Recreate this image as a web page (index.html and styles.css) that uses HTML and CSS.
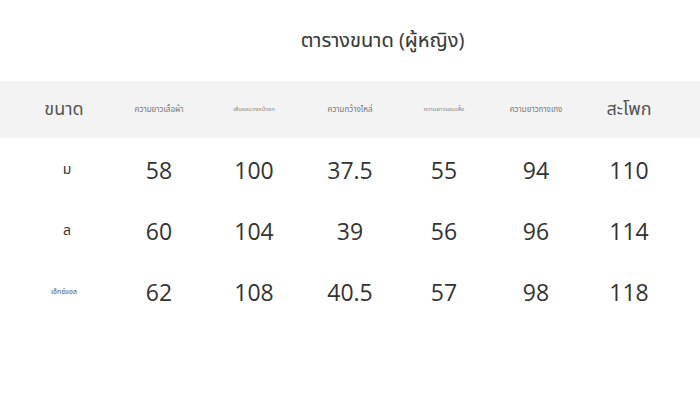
FILE: index.html
```html
<!DOCTYPE html>
<html lang="th">
<head>
<meta charset="utf-8">
<link rel="stylesheet" href="styles.css">
</head>
<body>
<div class="page">
  <h1 class="title">ตารางขนาด (ผู้หญิง)</h1>
  <div class="band">
    <div class="grid head">
      <div class="cell big">ขนาด</div>
      <div class="cell tiny">ความยาวเสื้อผ้า</div>
      <div class="cell tinier">เส้นรอบวงหน้าอก</div>
      <div class="cell tiny">ความกว้างไหล่</div>
      <div class="cell tinier">ความยาวแขนเสื้อ</div>
      <div class="cell tiny">ความยาวกางเกง</div>
      <div class="cell big">สะโพก</div>
    </div>
  </div>
  <div class="grid row first">
    <div class="cell label">ม</div>
    <div class="cell num">58</div>
    <div class="cell num">100</div>
    <div class="cell num">37.5</div>
    <div class="cell num">55</div>
    <div class="cell num">94</div>
    <div class="cell num">110</div>
  </div>
  <div class="grid row">
    <div class="cell label">ล</div>
    <div class="cell num">60</div>
    <div class="cell num">104</div>
    <div class="cell num">39</div>
    <div class="cell num">56</div>
    <div class="cell num">96</div>
    <div class="cell num">114</div>
  </div>
  <div class="grid row">
    <div class="cell label small">เอ็กซ์แอล</div>
    <div class="cell num">62</div>
    <div class="cell num">108</div>
    <div class="cell num">40.5</div>
    <div class="cell num">57</div>
    <div class="cell num">98</div>
    <div class="cell num">118</div>
  </div>
</div>
</body>
</html>
```
FILE: styles.css
```css
* { box-sizing: border-box; }
html, body { margin: 0; padding: 0; background: #ffffff; }
body {
  width: 700px;
  height: 418px;
  overflow: hidden;
  font-family: "Open Sans", "Noto Sans Thai", "Noto Sans", "DejaVu Sans", sans-serif;
  color: #333;
}
.page { padding-top: 25px; }
.title {
  margin: 0;
  height: 56px;
  text-align: center;
  font-size: 20px;
  font-weight: normal;
  color: #3a3a3a;
  line-height: 30px;
  padding-left: 65px;
  -webkit-text-stroke: 0.12px #3a3a3a;
}
.band {
  background: #f3f3f3;
  height: 57px;
  display: flex;
  align-items: center;
}
.grid {
  display: grid;
  grid-template-columns: 96px 94px 96px 96px 92px 92px 94px;
  padding-left: 16px;
  align-items: center;
}
.cell { text-align: center; white-space: nowrap; }
.head .big { font-size: 18px; color: #555; }
.head .tiny { font-size: 8px; color: #777; }
.head .tinier { font-size: 6px; color: #888; }
.row { height: 61px; }
.row.first { margin-top: 1px; }
.num { font-size: 23px; color: #333; }
.label { font-size: 14px; color: #333; padding-left: 6px; }
.label.small { font-size: 7px; color: #555; padding-left: 0; }
```
